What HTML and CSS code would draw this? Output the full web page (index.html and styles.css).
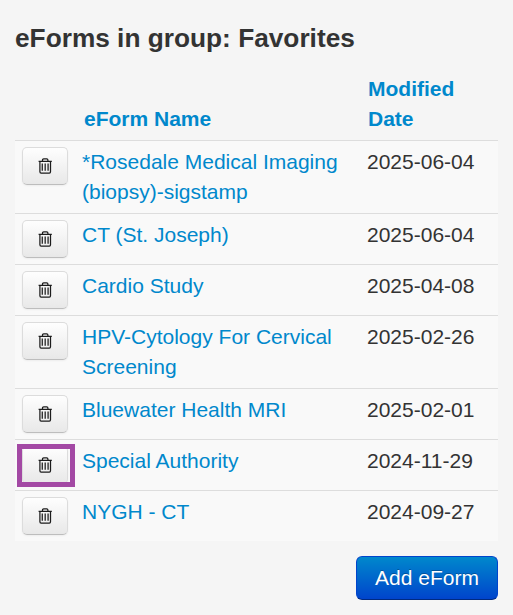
FILE: index.html
```html
<!DOCTYPE html>
<html lang="en">
<head>
<meta charset="utf-8">
<title>eForms in group: Favorites</title>
<link rel="stylesheet" href="styles.css">
</head>
<body>
<svg class="defs" width="0" height="0" aria-hidden="true">
  <symbol id="trash" viewBox="0 0 14 16">
    <path d="M.6 3.3h13.2M4.5 3.1V2.1C4.5 1.4 5 .9 5.7.9h3c.7 0 1.2.5 1.2 1.2v1M1.9 3.5v10.3c0 .8.5 1.3 1.2 1.3h8.2c.7 0 1.2-.5 1.2-1.3V3.5" fill="none" stroke="#1c1c1c" stroke-width="1.25"/>
    <path d="M4.3 5.6v7.2M7.2 5.6v7.2M10.1 5.6v7.2" fill="none" stroke="#333" stroke-width="1.4"/>
  </symbol>
</svg>
<h3 class="title">eForms in group: Favorites</h3>
<table class="forms">
  <thead>
    <tr>
      <th class="col-action"></th>
      <th class="col-name"><a href="#">eForm Name</a></th>
      <th class="col-date"><a href="#">Modified Date</a></th>
    </tr>
  </thead>
  <tbody>
    <tr>
      <td><button class="del" type="button" aria-label="Delete"><svg class="icon"><use href="#trash"/></svg></button></td>
      <td><a href="#">*Rosedale Medical Imaging (biopsy)-sigstamp</a></td>
      <td>2025-06-04</td>
    </tr>
    <tr>
      <td><button class="del" type="button" aria-label="Delete"><svg class="icon"><use href="#trash"/></svg></button></td>
      <td><a href="#">CT (St. Joseph)</a></td>
      <td>2025-06-04</td>
    </tr>
    <tr>
      <td><button class="del" type="button" aria-label="Delete"><svg class="icon"><use href="#trash"/></svg></button></td>
      <td><a href="#">Cardio Study</a></td>
      <td>2025-04-08</td>
    </tr>
    <tr>
      <td><button class="del" type="button" aria-label="Delete"><svg class="icon"><use href="#trash"/></svg></button></td>
      <td><a href="#">HPV-Cytology For Cervical Screening</a></td>
      <td>2025-02-26</td>
    </tr>
    <tr>
      <td><button class="del" type="button" aria-label="Delete"><svg class="icon"><use href="#trash"/></svg></button></td>
      <td><a href="#">Bluewater Health MRI</a></td>
      <td>2025-02-01</td>
    </tr>
    <tr>
      <td class="marked"><button class="del" type="button" aria-label="Delete"><svg class="icon"><use href="#trash"/></svg></button><span class="highlight"></span></td>
      <td><a href="#">Special Authority</a></td>
      <td>2024-11-29</td>
    </tr>
    <tr>
      <td><button class="del" type="button" aria-label="Delete"><svg class="icon"><use href="#trash"/></svg></button></td>
      <td><a href="#">NYGH - CT</a></td>
      <td>2024-09-27</td>
    </tr>
  </tbody>
</table>
<div class="actions"><button class="add" type="button">Add eForm</button></div>
</body>
</html>
```
FILE: styles.css
```css
* { box-sizing: border-box; }
html, body { height: 100%; }
body {
  margin: 0;
  padding: 0 15px;
  background: #f5f5f5;
  color: #333;
  font: 21px/30px "Liberation Sans", Arial, sans-serif;
  overflow: hidden;
}
.defs { position: absolute; }
.title {
  margin: 0;
  padding-top: 23px;
  font-size: 26.25px;
  line-height: 30px;
  font-weight: bold;
  color: #333;
}
a { color: #0088cc; text-decoration: none; }
.forms {
  width: 483px;
  margin-top: 15px;
  border-collapse: collapse;
  table-layout: fixed;
}
.col-action { width: 61px; }
.col-name { width: 291px; }
th {
  padding: 6px 6px 6px 8px;
  text-align: left;
  vertical-align: bottom;
  font-weight: bold;
}
th.col-date { padding-left: 1px; }
td {
  padding: 6px 6px;
  vertical-align: top;
  border-top: 1px solid #ddd;
  background: #f9f9f9;
}
td:last-child { padding-left: 0; }
.marked { position: relative; }
.del {
  display: flex;
  align-items: center;
  justify-content: center;
  width: 46px;
  height: 38px;
  margin-left: 1px;
  padding: 0;
  border: 1px solid #dcdcdc;
  border-bottom-color: #bdbdbd;
  border-radius: 5px;
  background: linear-gradient(#fefefe, #e8e8e8);
  box-shadow: 0 1px 2px rgba(0,0,0,.05);
}
.icon { width: 14px; height: 16px; display: block; }
.highlight {
  position: absolute;
  left: 2px;
  top: 4px;
  width: 58px;
  height: 43px;
  border: 5px solid #a349a4;
}
.actions {
  display: flex;
  justify-content: flex-end;
  margin-top: 15px;
}
.add {
  width: 142px;
  height: 44px;
  padding: 0;
  border: 1px solid #0055b3;
  border-color: #04c #04c #002a80;
  border-radius: 6px;
  background: linear-gradient(#0088cc, #0044cc);
  color: #fff;
  font: 21px/30px "Liberation Sans", Arial, sans-serif;
  text-shadow: 0 -1px 0 rgba(0,0,0,.25);
}
```
